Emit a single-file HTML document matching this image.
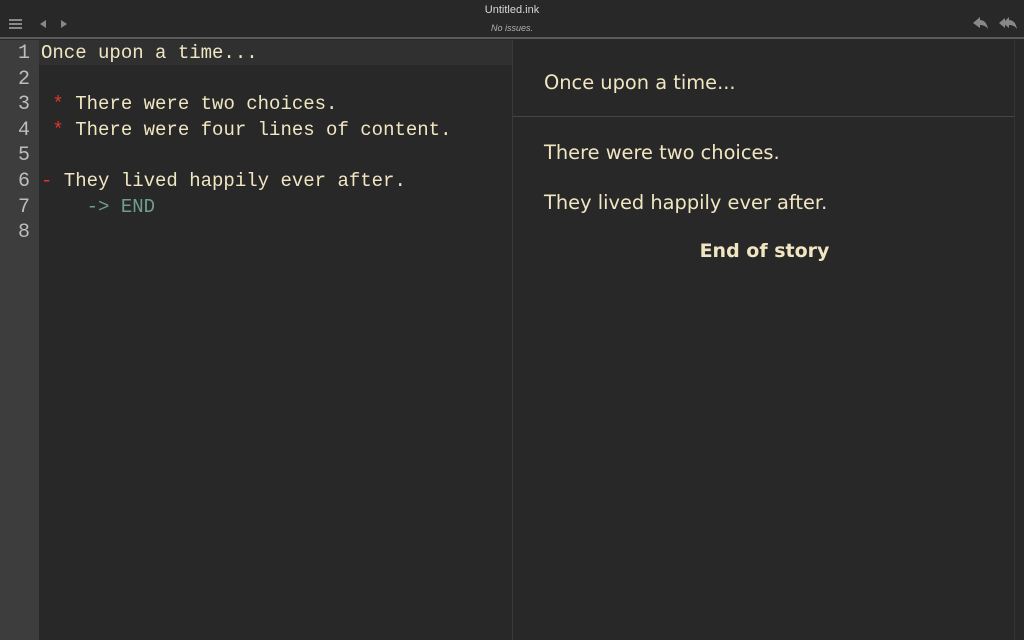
<!DOCTYPE html>
<html><head><meta charset="utf-8"><style>
*{margin:0;padding:0;box-sizing:border-box}
body{width:1024px;height:640px;background:#282828;overflow:hidden;position:relative;font-family:"Liberation Sans",sans-serif}
#top{position:absolute;left:0;top:0;width:1024px;height:39px;background:#282828;border-bottom:2px solid #5a5a5a}
.title{position:absolute;left:0;width:1024px;text-align:center;color:#d8d8d8;font-size:11px;top:4px}
.sub{position:absolute;left:0;width:1024px;text-align:center;color:#b0b0b0;font-size:9px;font-style:italic;top:23px}
#gut{position:absolute;left:0;top:40px;width:39px;height:600px;background:#3d3d3d}
#ed{position:absolute;left:39px;top:40px;width:473px;height:600px;background:#282828}
.hl{position:absolute;left:39px;top:40px;width:473px;height:25px;background:#303030}
.ln{position:absolute;left:0;width:30px;text-align:right;color:#bdbdbd;font:20px "Liberation Mono",monospace;line-height:25.6px}
.code{position:absolute;left:41px;color:#f1e6c2;font:19px "Liberation Mono",monospace;line-height:25.6px;white-space:pre}
.r{color:#e2362c}.g{color:#6f9e8e}
#div{position:absolute;left:512px;top:40px;width:1px;height:600px;background:#3a3a3a}
#div2{position:absolute;left:1014px;top:40px;width:1px;height:600px;background:#333}
#hr{position:absolute;left:513px;top:116px;width:501px;height:1px;background:#454545}
.p{position:absolute;left:544px;color:#f1e6c2;font:19.4px "DejaVu Sans",sans-serif;white-space:nowrap}
.end{position:absolute;left:513px;width:501px;text-align:center;color:#f1e6c2;font:bold 19px "DejaVu Sans",sans-serif}
</style></head><body>
<div id="top">
<div class="title">Untitled.ink</div>
<div class="sub">No issues.</div>
<svg style="position:absolute;left:9px;top:19px" width="14" height="10"><rect y="0" width="13" height="2" fill="#888"/><rect y="4" width="13" height="2" fill="#888"/><rect y="8" width="13" height="2" fill="#888"/></svg>
<svg style="position:absolute;left:39px;top:20px" width="30" height="9"><polygon points="7,0 7,8 1,4" fill="#888"/><polygon points="22,0 22,8 28,4" fill="#888"/></svg>
<svg style="position:absolute;left:972px;top:16px" width="48" height="15"><path d="M1,7 L8,1 L8,4 C12,4 15,7 16,13 C14,10 11,9 8,9 L8,12 Z" fill="#888"/><path d="M27,7 L33,2 L33,12 Z M31,7 L37,1 L37,4 C41,4 44,7 45,13 C43,10 40,9 37,9 L37,12 Z" fill="#888"/></svg>
</div>
<div id="gut"></div>
<div id="ed"></div>
<div class="hl"></div>
<div class="ln" style="top:41px">1<br>2<br>3<br>4<br>5<br>6<br>7<br>8</div>
<div class="code" style="top:41px">Once upon a time...

 <span class="r">*</span> There were two choices.
 <span class="r">*</span> There were four lines of content.

<span class="r">-</span> They lived happily ever after.
    <span class="g">-&gt; END</span>
</div>
<div id="div"></div>
<div id="div2"></div>
<div id="hr"></div>
<div class="p" style="top:71px">Once upon a time...</div>
<div class="p" style="top:141px">There were two choices.</div>
<div class="p" style="top:191px">They lived happily ever after.</div>
<div class="end" style="top:240px;padding-left:2px">End of story</div>
</body></html>
